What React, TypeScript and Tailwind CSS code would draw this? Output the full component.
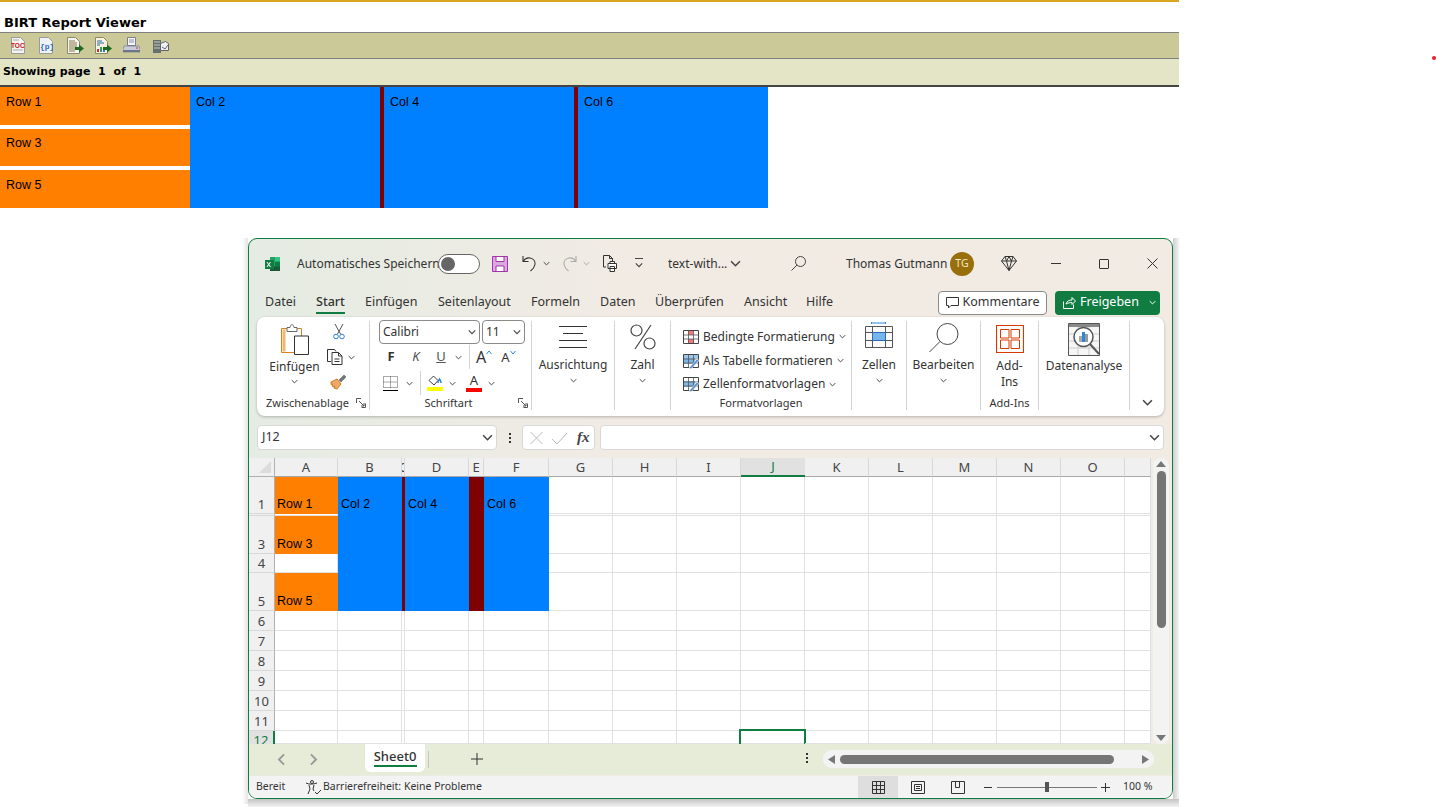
const ui = 'font-["Noto_Sans",sans-serif]';

const colLabels = ['A', 'B', 'C', 'D', 'E', 'F', 'G', 'H', 'I', 'J', 'K', 'L', 'M', 'N', 'O', ''];
const rowLabels = ['1', '', '3', '4', '5', '6', '7', '8', '9', '10', '11', '12'];

function Chev({ size = 7, color = '#444', className = '' }: { size?: number; color?: string; className?: string }) {
  return (
    <svg width={size} height={size} viewBox="0 0 10 10" className={className} fill="none" stroke={color} strokeWidth="1.4">
      <path d="M1 3l4 4 4-4" />
    </svg>
  );
}

function Launcher() {
  return (
    <svg width="10" height="10" viewBox="0 0 10 10" fill="none" stroke="#555" strokeWidth="1">
      <path d="M.5 5V.5H5M9.5 5.5v4h-4M3 3l5 5M5 8h3V5" />
    </svg>
  );
}

function TocIcon() {
  return (
    <svg width="14" height="17" viewBox="0 0 14 17">
      <path d="M.5.5h9l4 4v12H.5z" fill="#f4f4f4" stroke="#9a9a9a" />
      <path d="M2 3h6M2 13h10" stroke="#aaa" />
      <text x="0" y="11" fontSize="6.5" fontWeight="700" fill="#d01010" fontFamily="Liberation Sans">TOC</text>
    </svg>
  );
}

function ParamIcon() {
  return (
    <svg width="14" height="17" viewBox="0 0 14 17">
      <path d="M.5.5h9l4 4v12H.5z" fill="#eef3fa" stroke="#9a9a9a" />
      <text x="1" y="12" fontSize="8" fontWeight="700" fill="#2b6cc4" fontFamily="Liberation Mono">{'{p}'}</text>
    </svg>
  );
}

function DocArrowIcon({ chart }: { chart?: boolean }) {
  return (
    <svg width="17" height="17" viewBox="0 0 17 17">
      <path d="M.5.5h8l4 4v12H.5z" fill={chart ? '#fbf3dc' : '#f4f4f4'} stroke="#8a8a6a" />
      {chart ? (
        <>
          <path d="M2 4h5M2 6h7M2 8h3" stroke="#2b62b0" />
          <path d="M2 12h2v3H2z" fill="#e02040" />
          <path d="M5 10h2v5H5z" fill="#20a070" />
          <path d="M8 12h2v3H8z" fill="#3070d0" />
        </>
      ) : (
        <path d="M2 4h6M2 6h8M2 8h8M2 10h8M2 12h8M2 14h6" stroke="#8a7a40" />
      )}
      <path d="M8 10h4V7.500l5 4-5 4V13H8z" fill="#1f6a1f" />
    </svg>
  );
}

function PrinterIcon() {
  return (
    <svg width="17" height="17" viewBox="0 0 17 17">
      <path d="M4.500.5h8v8h-8z" fill="#f4f6fa" stroke="#7a7f90" />
      <path d="M6 3h5M6 5h5" stroke="#8a90a0" />
      <path d="M1 9h15l1 3v3H0v-3z" fill="#c8ccd8" stroke="#6a7080" strokeWidth=".6" />
      <path d="M0 13h17v2H0z" fill="#6c7688" />
      <path d="M13 10.500h2v1h-2z" fill="#d03030" />
    </svg>
  );
}

function ServerIcon() {
  return (
    <svg width="16" height="16" viewBox="0 0 16 16">
      <path d="M0 2h8v13H0z" fill="#66706c" />
      <path d="M1 4h6M1 7h6M1 10h6" stroke="#c8ccc4" />
      <path d="M7.500 5.500l5-2 3 2v7h-8z" fill="#f0f0f0" stroke="#60646a" />
      <path d="M9 9l3 2 3-4" fill="none" stroke="#606a70" />
    </svg>
  );
}

function ExcelLogo() {
  return (
    <svg width="16" height="16" viewBox="0 0 16 16">
      <path d="M5 1h10v14H5z" fill="#21a366" />
      <path d="M10 1h5v4.700h-5z" fill="#33c481" />
      <path d="M10 5.700h5v4.600h-5z" fill="#107c41" />
      <path d="M5 10.300h10V15H5z" fill="#185c37" />
      <path d="M0 4h9v9H0z" fill="#107c41" />
      <path d="M2.500 6l1.100 1.700h.1L4.900 6H6L4.300 8.500 6 11H4.900L3.700 9.300 2.500 11H1.400l1.700-2.500L1.500 6z" fill="#fff" />
    </svg>
  );
}

function SaveIcon() {
  return (
    <svg width="16" height="16" viewBox="0 0 16 16">
      <path d="M.5.500h15v15H.5z" fill="#dba9e0" stroke="#a334ab" />
      <path d="M4 .500h8v5H4zM4 10h8v5.500H4z" fill="#fff" stroke="#a334ab" />
    </svg>
  );
}

function UndoIcon({ color }: { color: string }) {
  return (
    <svg width="15" height="17" viewBox="0 0 15 17" fill="none" stroke={color} strokeWidth="1.100">
      <path d="M1 1v5.500h5.500" />
      <path d="M1.200 6.300C3 3.500 5.500 2.500 8 3c3.500.8 5.500 3.500 5 6.500-.4 2.500-2 4.500-4.500 6.500" />
    </svg>
  );
}

function PrintPreviewIcon() {
  return (
    <svg width="15" height="17" viewBox="0 0 15 17" fill="none" stroke="#333" strokeWidth="1">
      <path d="M3 12H.5V.5h6l3 3v2.500M6.500.5v3h3" />
      <path d="M5 8.500h8.500v5H5zM7 8.500V6.500h4.500v2M7 11.500h4.500v5H7z" fill="#fff" />
    </svg>
  );
}

function PasteIcon() {
  return (
    <svg width="28" height="31" viewBox="0 0 28 31">
      <path d="M.5 4.500h20v24H.5z" fill="#fff" stroke="#d98324" strokeWidth="1" />
      <path d="M1.500 5.500h3v22h-3z" fill="#f4b66a" />
      <path d="M6 3.500h3C9.500 1.500 10.500.5 11 .5s1.500 1 2 3h3v4H6z" fill="#fff" stroke="#666" />
      <path d="M13.500 12h14v18.500h-14z" fill="#fff" stroke="#333" />
    </svg>
  );
}

function ScissorsIcon() {
  return (
    <svg width="12" height="16" viewBox="0 0 12 16" fill="none" strokeWidth="1">
      <path d="M2 0l5.500 10M10 0L4.500 10" stroke="#555" />
      <circle cx="3" cy="12.500" r="2.300" stroke="#2b7cd3" />
      <circle cx="9" cy="12.500" r="2.300" stroke="#2b7cd3" />
    </svg>
  );
}

function CopyIcon() {
  return (
    <svg width="16" height="16" viewBox="0 0 16 16" fill="none" stroke="#333" strokeWidth="1">
      <path d="M4 12.500H.5V.5h7l1.500 2" />
      <path d="M5 3.500h6.500l3.500 3.500v8.500H5zM11.500 3.500V7H15M7.500 10h5M7.500 12.500h5" fill="#fff" />
    </svg>
  );
}

function PainterIcon() {
  return (
    <svg width="17" height="16" viewBox="0 0 17 16">
      <path d="M1 8l6-3 4 5-4 5-3-1 1-2-2 1-1-2 1-1-2 .5z" fill="#f2a766" stroke="#d07a24" />
      <path d="M9 6l5-5 2 2-5 5z" fill="#777" stroke="#555" strokeWidth=".5" />
    </svg>
  );
}

function GrowFontIcon({ up }: { up: boolean }) {
  return (
    <span className="flex items-start">
      <span className={up ? 'text-[16px] leading-[18px] text-[#333]' : 'text-[13px] leading-[18px] text-[#333]'}>A</span>
      <svg width="6" height="5" viewBox="0 0 6 5" fill="none" stroke="#2b88d8" strokeWidth="1" className="mt-[2px]">
        <path d={up ? 'M.5 4L3 1l2.500 3' : 'M.5 1L3 4l2.500-3'} />
      </svg>
    </span>
  );
}

function BorderIcon() {
  return (
    <svg width="15" height="15" viewBox="0 0 15 15" fill="none" stroke="#555" strokeDasharray="1 1">
      <path d="M.5.500h14v11H.5zM7.500.5v11M.5 6h14" />
      <path d="M0 14.500h15" stroke="#000" strokeDasharray="none" />
    </svg>
  );
}

function FillIcon() {
  return (
    <span className="flex flex-col items-center w-[16px]">
      <svg width="14" height="11" viewBox="0 0 14 11" fill="none">
        <path d="M1 5.500L5.500 1l4.500 4.500L6 10z" stroke="#444" />
        <path d="M10 8c0-2 1-3 1.500-4 .5 1 1.500 2 1.500 4" stroke="#2b7cd3" strokeWidth="1.400" />
      </svg>
      <span className="w-[16px] h-[4px] bg-[#ffff00] mt-[1px]" />
    </span>
  );
}

function FormatRowIcon({ kind }: { kind: number }) {
  return (
    <svg width="16" height="16" viewBox="0 0 16 16" fill="none">
      <path d="M.5 1.500h15v13H.5z" fill="#fff" stroke="#444" />
      {kind === 0 && (
        <>
          <path d="M5 2h5v4H5zM5 10h6v4H5z" fill="#f4777a" />
          <path d="M1 6h4v4H1z" fill="#fff" />
        </>
      )}
      {kind > 0 && <path d="M1 2h14v3H1z" fill={kind === 1 ? '#9cc8ee' : '#fff'} />}
      {kind > 0 && <path d="M1 5h11v6H1z" fill="#7fb7e8" />}
      <path d="M5.500 2v12M10.500 2v12M1 6h14M1 10h14" stroke="#555" strokeWidth=".8" />
      {kind > 0 && <path d="M6 15l8-9 2 1.500-8 8.500z" fill="#5b8fc6" stroke="#fff" strokeWidth=".6" />}
    </svg>
  );
}

function CellsIcon() {
  return (
    <svg width="28" height="28" viewBox="0 0 28 28" fill="none" stroke="#555" strokeWidth="1">
      <path d="M6.500 1v2M20.500 1v2M6.500 2h14" stroke="#2b88d8" />
      <path d="M.5 5.500h27v21H.5z" fill="#fbfbfb" />
      <path d="M7.500 11.500h13v8h-13z" fill="#77b6ea" />
      <path d="M.5 11.500h27M.5 19.500h27M7.500 5.500v21M20.500 5.500v21" />
      <path d="M7.500 11.500h13v8h-13z" stroke="#2b6cb8" />
    </svg>
  );
}

function LensIcon() {
  return (
    <svg width="30" height="30" viewBox="0 0 30 30" fill="none" stroke="#444" strokeWidth="1">
      <circle cx="18.500" cy="11" r="10.500" fill="#fff" />
      <path d="M11 18.500L.5 29" />
    </svg>
  );
}

function AddInsIcon() {
  return (
    <svg width="28" height="28" viewBox="0 0 28 28" fill="none" stroke="#d83b01" strokeWidth="1">
      <path d="M.5.500h27v27H.5z" strokeWidth="1.200" />
      <path d="M4.500 4.500h8.500v8.500H4.500zM15 4.500h8.500v8.500H15zM4.500 15h8.500v8.500H4.500zM15 15h8.500v8.500H15z" />
    </svg>
  );
}

function AnalysisIcon() {
  return (
    <svg width="32" height="33" viewBox="0 0 32 33" fill="none">
      <path d="M.5.500h31v32H.5z" fill="#f6f6f6" stroke="#555" />
      <path d="M1 1h30v3H1z" fill="#8a8a8a" />
      <path d="M1 11h30M1 18h30M1 25h30M10 4v28M21 4v28" stroke="#ccc" />
      <circle cx="15.500" cy="14" r="9.500" fill="#fff" stroke="#555" strokeWidth="1.500" />
      <path d="M11 13h3v6h-3z" fill="#aaa" />
      <path d="M14 9h3v10h-3z" fill="#2b88d8" />
      <path d="M17 11h3v8h-3z" fill="#999" />
      <path d="M22 21l9 10" stroke="#555" strokeWidth="2" />
    </svg>
  );
}

function BigGroup({ width, label, lines, children, pt }: { width: string; label?: string; lines: string[]; children: React.ReactNode; pt: string }) {
  return (
    <div className={`${width} ${pt} h-[89px] border-r border-[#d4d4d4] flex flex-col items-center shrink-0`}>
      {children}
      {lines.map((l) => (
        <span key={l} className="text-[12px] leading-[16px] text-[#333]">{l}</span>
      ))}
      {!label && <Chev className="mt-[4px]" />}
      {label && <span className="mt-auto text-[11px] leading-[14px] text-[#333]">{label}</span>}
    </div>
  );
}

function Ribbon() {
  return (
    <div className="mx-[8px] w-[907px] h-[99px] bg-white rounded-[8px] shadow-[0_1px_3px_rgba(0,0,0,0.25)] flex py-[4px] shrink-0">
      <div className="w-[113px] h-[89px] border-r border-[#d4d4d4] flex flex-col shrink-0">
        <div className="flex flex-1">
          <div className="w-[74px] flex flex-col items-center pl-[1px] pt-[3px]">
            <PasteIcon />
            <span className="text-[12px] leading-[16px] mt-[4px] text-[#333]">Einfügen</span>
            <Chev className="mt-[3px]" />
          </div>
          <div className="flex flex-col pt-[3px] gap-[9px]">
            <span className="pl-[0px] flex justify-center w-[16px]"><ScissorsIcon /></span>
            <span className="flex items-center gap-[5px] -ml-[4px]"><CopyIcon /><Chev /></span>
            <span className="-ml-[1px]"><PainterIcon /></span>
          </div>
        </div>
        <div className="flex items-center justify-between pl-[9px] pr-[3px] h-[14px]">
          <span className="text-[11px] leading-[14px] text-[#333]">Zwischenablage</span>
          <Launcher />
        </div>
      </div>

      <div className="w-[162px] h-[89px] border-r border-[#d4d4d4] flex flex-col pl-[9px] shrink-0">
        <div className="flex gap-[2px] -mt-[1px]">
          <div className="w-[101px] h-[24px] border border-[#8a8a8a] rounded-[4px] flex items-center justify-between px-[3px] text-[12px] text-[#333]">
            Calibri <Chev size={8} />
          </div>
          <div className="w-[43px] h-[24px] border border-[#8a8a8a] rounded-[4px] flex items-center justify-between px-[3px] text-[12px] text-[#333]">
            11 <Chev size={8} />
          </div>
        </div>
        <div className="flex items-center h-[20px] mt-[3px] text-[#333]">
          <span className="w-[24px] text-center text-[13px] font-bold">F</span>
          <span className="w-[26px] text-center text-[13px] italic text-[#555]">K</span>
          <span className="w-[24px] text-center text-[13px] underline text-[#555]">U</span>
          <Chev className="ml-[2px]" />
          <span className="w-px h-[24px] bg-[#d4d4d4] ml-[7px] mr-[6px]" />
          <GrowFontIcon up />
          <span className="ml-[9px]"><GrowFontIcon up={false} /></span>
        </div>
        <div className="flex items-center h-[22px] mt-[5px]">
          <span className="ml-[4px]"><BorderIcon /></span>
          <Chev className="ml-[8px]" />
          <span className="w-px h-[24px] bg-[#d4d4d4] ml-[7px] mr-[6px]" />
          <FillIcon />
          <Chev className="ml-[6px]" />
          <span className="ml-[10px] flex flex-col items-center w-[16px] text-[13px] leading-[13px] text-[#333]">
            A
            <span className="w-[16px] h-[4px] bg-[#ff0000] mt-[1px]" />
          </span>
          <Chev className="ml-[6px]" />
        </div>
        <div className="flex items-center h-[14px] mt-auto pr-[3px]">
          <span className="flex-1 text-center text-[11px] leading-[14px] text-[#333]">Schriftart</span>
          <Launcher />
        </div>
      </div>

      <BigGroup width="w-[83px]" lines={['Ausrichtung']} pt="pt-[5px]">
        <svg width="28" height="23" viewBox="0 0 28 23" stroke="#333" className="mb-[8px]">
          <path d="M0 .5h28M4 7.500h20M0 14.500h28M0 21.500h28" />
        </svg>
      </BigGroup>
      <BigGroup width="w-[56px]" lines={['Zahl']} pt="pt-[3px]">
        <svg width="26" height="26" viewBox="0 0 26 26" fill="none" stroke="#444" strokeWidth="1.200" className="mb-[7px]">
          <circle cx="6.500" cy="6.500" r="5.500" />
          <circle cx="19.500" cy="19.500" r="5.500" />
          <path d="M21 1L5 25" />
        </svg>
      </BigGroup>

      <div className="w-[181px] h-[89px] border-r border-[#d4d4d4] flex flex-col shrink-0 pl-[12px] pt-[4px]">
        {['Bedingte Formatierung', 'Als Tabelle formatieren', 'Zellenformatvorlagen'].map((t, i) => (
          <div key={t} className="flex items-center h-[26px] gap-[4px] text-[12px] text-[#333]">
            <FormatRowIcon kind={i} />
            <span>{t}</span>
            <Chev />
          </div>
        ))}
        <span className="mt-auto -ml-[12px] text-center text-[11px] leading-[14px] text-[#333]">Formatvorlagen</span>
      </div>

      <BigGroup width="w-[55px]" lines={['Zellen']} pt="pt-0">
        <span className="mb-[8px]"><CellsIcon /></span>
      </BigGroup>
      <BigGroup width="w-[74px]" lines={['Bearbeiten']} pt="pt-[2px]">
        <span className="mb-[4px]"><LensIcon /></span>
      </BigGroup>
      <BigGroup width="w-[58px]" label="Add-Ins" lines={['Add-', 'Ins']} pt="pt-[4px]">
        <span className="mb-[5px]"><AddInsIcon /></span>
      </BigGroup>
      <div className="w-[91px] h-[89px] border-r border-[#d4d4d4] flex flex-col items-center pt-[2px] shrink-0">
        <AnalysisIcon />
        <span className="text-[12px] leading-[16px] mt-[2px] text-[#333]">Datenanalyse</span>
      </div>
      <div className="flex-1 flex items-end justify-center pb-[4px]">
        <Chev size={11} />
      </div>
    </div>
  );
}

function Sheet() {
  return (
    <div className="w-[902px] h-[286px] overflow-hidden grid grid-cols-[26px_63px_64px_3px_64px_15px_65px_repeat(9,64px)_26px] grid-rows-[19px_37px_2px_38px_19px_38px_repeat(6,20px)_13px] bg-white text-[13px] shrink-0">
      <div className="col-start-3 row-start-2 row-span-5 bg-[#007fff] pl-[3px] pt-[19px] font-['Liberation_Sans',sans-serif] text-[12.5px] leading-[16px] text-black">Col 2</div>
      <div className="col-start-4 row-start-2 row-span-5 bg-[#7f0000]" />
      <div className="col-start-5 row-start-2 row-span-5 bg-[#007fff] pl-[3px] pt-[19px] font-['Liberation_Sans',sans-serif] text-[12.5px] leading-[16px] text-black">Col 4</div>
      <div className="col-start-6 row-start-2 row-span-5 bg-[#7f0000]" />
      <div className="col-start-7 row-start-2 row-span-5 bg-[#007fff] pl-[3px] pt-[19px] font-['Liberation_Sans',sans-serif] text-[12.5px] leading-[16px] text-black">Col 6</div>

      <div className="relative bg-[#f0f0f0] border-r border-b border-[#b0b0b0]">
        <svg width="12" height="12" viewBox="0 0 12 12" className="absolute left-[10px] top-[3px]"><path d="M12 0v12H0z" fill="#dcdcdc" /></svg>
      </div>
      {colLabels.map((c, i) => (
        <div
          key={i}
          className={
            c === 'J'
              ? 'bg-[#e1e1e1] border-b-2 border-[#107c41] flex items-center justify-center overflow-hidden text-[#107c41] leading-none'
              : 'bg-[#f0f0f0] border-r border-b border-r-[#d8d8d8] border-b-[#a8a8a8] flex items-center justify-center overflow-hidden text-[#444] leading-none'
          }
        >
          {c}
        </div>
      ))}

      {rowLabels.map((r, ri) => {
        const rowNum = ri + 1;
        const inBlock = rowNum <= 5;
        const orange = r === '1' || r === '3' || r === '5';
        return [
          <div
            key={`h${ri}`}
            className={
              r === '12'
                ? 'bg-[#e1e1e1] border-r-2 border-[#107c41] text-center text-[#107c41] leading-[18px]'
                : 'bg-[#f0f0f0] border-r border-b border-r-[#b0b0b0] border-b-[#d8d8d8] flex items-end justify-center text-[#444] leading-[18px] overflow-hidden'
            }
          >
            {r}
          </div>,
          <div
            key={`a${ri}`}
            className={
              orange
                ? "bg-[#ff7f00] flex items-end pl-[2px] pb-[1px] font-['Liberation_Sans',sans-serif] text-[12.5px] leading-[18px] text-black"
                : 'border-r border-b border-[#e1e1e1]'
            }
          >
            {orange ? `Row ${r}` : ''}
          </div>,
          ...(inBlock ? [] : [0, 1, 2, 3, 4]).map((k) => <div key={`l${ri}-${k}`} className="border-r border-b border-[#e1e1e1]" />),
          ...colLabels.slice(6).map((c) => (
            <div key={`${c}${ri}`} className="relative border-r border-b border-[#e1e1e1]">
              {c === 'J' && r === '12' && (
                <div className="absolute -left-[2px] -top-[2px] w-[67px] h-[20px] border-2 border-[#107c41]" />
              )}
            </div>
          )),
        ];
      })}
    </div>
  );
}

export default function App() {
  return (
    <div className={`relative w-[1437px] h-[807px] overflow-hidden bg-white`}>
      <div className="w-[1179px] border-t-2 border-[#daa520] font-['DejaVu_Sans',sans-serif]">
        <div className="h-[30px] flex items-end pl-[4px] pb-[1px] text-[13px] leading-[16px] font-bold text-black">BIRT Report Viewer</div>
        <div className="h-[27px] border-y border-[#808080] bg-[#cbc998] flex items-center pl-[11px] gap-[13px]">
          <span className="w-[15px]"><TocIcon /></span>
          <span className="w-[15px]"><ParamIcon /></span>
          <DocArrowIcon />
          <span className="ml-[-2px] mr-[-2px]"><DocArrowIcon chart /></span>
          <PrinterIcon />
          <ServerIcon />
        </div>
        <div className="h-[26px] bg-[#e4e4c6] flex items-center pl-[3px] text-[11px] font-bold text-black whitespace-pre">Showing page  1  of  1</div>
        <div className="h-[2px] bg-[#444444]" />
      </div>

      <div className="flex w-[768px] h-[121px] font-['Liberation_Sans',sans-serif] text-[12.5px] leading-[16px] text-black">
        <div className="w-[190px] flex flex-col">
          <div className="h-[38px] bg-[#ff7f00] pl-[6px] pt-[7px]">Row 1</div>
          <div className="h-[37px] mt-[4px] bg-[#ff7f00] pl-[6px] pt-[6px]">Row 3</div>
          <div className="h-[38px] mt-[4px] bg-[#ff7f00] pl-[6px] pt-[7px]">Row 5</div>
        </div>
        <div className="w-[190px] bg-[#007fff] pl-[6px] pt-[7px]">Col 2</div>
        <div className="w-[4px] bg-[#7f0000]" />
        <div className="w-[190px] bg-[#007fff] pl-[6px] pt-[7px]">Col 4</div>
        <div className="w-[4px] bg-[#7f0000]" />
        <div className="w-[190px] bg-[#007fff] pl-[6px] pt-[7px]">Col 6</div>
      </div>

      <div className="absolute left-[1432px] top-[56px] w-[4px] h-[4px] rounded-full bg-[#ee1c25]" />

      {/* excel window */}
      <div className={`${ui} absolute left-[248px] top-[238px] w-[925px] h-[561px] rounded-[9px] border border-[#107c41] overflow-hidden bg-gradient-to-r from-[#e5ece3] via-[#f1ebe4] via-40% to-[#f1ebe4] flex flex-col text-[#333]`}>
        <div className="h-[49px] flex items-center pl-[16px] text-[12px] shrink-0">
          <ExcelLogo />
          <span className="ml-[16px] w-[141px] whitespace-nowrap">Automatisches Speichern</span>
          <span className="w-[42px] h-[20px] rounded-full border border-[#666] bg-white flex items-center pl-[2px]">
            <span className="w-[14px] h-[14px] rounded-full bg-[#666]" />
          </span>
          <span className="ml-[12px]"><SaveIcon /></span>
          <span className="ml-[14px]"><UndoIcon color="#333" /></span>
          <Chev className="ml-[6px]" />
          <span className="ml-[12px]"><svg width="15" height="17" viewBox="0 0 15 17" className="-scale-x-100"><g fill="none" stroke="#aaa" strokeWidth="1.100"><path d="M1 1v5.500h5.500" /><path d="M1.200 6.300C3 3.500 5.500 2.500 8 3c3.500.8 5.500 3.500 5 6.500-.4 2.500-2 4.500-4.500 6.500" /></g></svg></span>
          <Chev className="ml-[6px]" color="#aaa" />
          <span className="ml-[13px]"><PrintPreviewIcon /></span>
          <span className="ml-[16px] flex flex-col items-center gap-[2px] w-[9px]"><span className="w-[8px] h-px bg-[#444]" /><Chev size={8} /></span>
          <span className="ml-[25px] w-[62px] whitespace-nowrap">text-with...</span>
          <Chev size={11} />
          <svg width="15" height="15" viewBox="0 0 15 15" fill="none" stroke="#444" className="ml-[50px]"><circle cx="9.500" cy="5.500" r="5" /><path d="M6 9l-5.500 5.500" /></svg>
          <span className="ml-[40px] w-[104px] whitespace-nowrap">Thomas Gutmann</span>
          <span className="w-[24px] h-[24px] rounded-full bg-[#986f0b] text-[#f3e9c8] text-[10.500px] flex items-center justify-center">TG</span>
          <svg width="16" height="15" viewBox="0 0 16 15" fill="none" stroke="#333" className="ml-[27px]"><path d="M4 .5h8l3.500 4.500L8 14.500.5 5zM.5 5h15M4 .5L5.500 5 8 14.500 10.500 5 12 .5M5.500 5L8 .5 10.500 5" /></svg>
          <span className="ml-[34px] w-[10px] h-px bg-[#333]" />
          <span className="ml-[38px] w-[10px] h-[10px] border border-[#333] rounded-[1px]" />
          <svg width="11" height="11" viewBox="0 0 11 11" stroke="#333" className="ml-[38px]"><path d="M.5.500l10 10M10.500.500l-10 10" /></svg>
        </div>

        <div className="h-[29px] flex items-center pl-[16px] text-[12.500px] shrink-0">
          <span className="w-[51px]">Datei</span>
          <span className="w-[49px] relative font-medium">
            Start
            <span className="absolute left-0 top-[19px] w-[29px] h-[2px] bg-[#107c41]" />
          </span>
          <span className="w-[73px]">Einfügen</span>
          <span className="w-[93px]">Seitenlayout</span>
          <span className="w-[69px]">Formeln</span>
          <span className="w-[55px]">Daten</span>
          <span className="w-[89px]">Überprüfen</span>
          <span className="w-[62px]">Ansicht</span>
          <span className="w-[132px]">Hilfe</span>
          <span className="w-[109px] h-[24px] bg-white border border-[#8a8a8a] rounded-[4px] flex items-center justify-center gap-[4px]">
            <svg width="13" height="13" viewBox="0 0 13 13" fill="none" stroke="#333"><path d="M.5 1.500h12v8H5L2.500 12V9.500h-2z" /></svg>
            Kommentare
          </span>
          <span className="ml-[8px] w-[105px] h-[24px] bg-[#107c41] rounded-[4px] flex items-center pl-[8px] text-white">
            <svg width="13" height="13" viewBox="0 0 13 13" fill="none" stroke="#fff" className="mr-[4px]"><path d="M.5 5.500v7h10v-4M3 8c1-3 3-4 6-4V1.500l3.500 3.500L9 8.500V6.500C7 6.500 5 7 3 8z" /></svg>
            Freigeben
            <Chev color="#fff" className="ml-[10px]" />
          </span>
        </div>

        <Ribbon />

        <div className="mt-[9px] h-[25px] mx-[8px] flex items-stretch gap-[5px] text-[12.500px] shrink-0">
          <div className="w-[240px] bg-white rounded-[4px] border border-[#d8d8d8] flex items-center justify-between pl-[4px] pr-[3px]">
            J12 <Chev size={11} />
          </div>
          <div className="w-[15px] flex flex-col items-center justify-center gap-[2px]">
            <span className="w-[2px] h-[2px] bg-[#333]" />
            <span className="w-[2px] h-[2px] bg-[#333]" />
            <span className="w-[2px] h-[2px] bg-[#333]" />
          </div>
          <div className="w-[73px] bg-white rounded-[4px] border border-[#d8d8d8] flex items-center pl-[7px]">
            <svg width="38" height="14" viewBox="0 0 38 14" fill="none" stroke="#bbb"><path d="M.5 1l12 12M12.500 1l-12 12M22 8l5 5 10-11" /></svg>
            <span className="ml-[9px] font-['Liberation_Serif',serif] italic font-bold text-[15px] leading-none text-[#444]">fx</span>
          </div>
          <div className="flex-1 bg-white rounded-[4px] border border-[#d8d8d8] flex items-center justify-end pr-[3px]">
            <Chev size={11} />
          </div>
        </div>

        <div className="mt-[8px] flex h-[286px] shrink-0">
          <Sheet />
          <div className="ml-[2px] w-[16px] h-[286px] bg-[#f3f3f3] rounded-[8px] flex flex-col items-center pt-[3px] pb-[3px]">
            <svg width="10" height="6" viewBox="0 0 10 6"><path d="M5 0l5 6H0z" fill="#777" /></svg>
            <span className="mt-[4px] w-[9px] h-[157px] rounded-full bg-[#757575]" />
            <svg width="10" height="6" viewBox="0 0 10 6" className="mt-auto"><path d="M5 6L0 0h10z" fill="#777" /></svg>
          </div>
        </div>

        <div className="h-[31px] bg-[#e6ecd8] flex items-start shrink-0">
          <Chev size={13} color="#999" className="ml-[26px] mt-[9px] rotate-90" />
          <Chev size={13} color="#999" className="ml-[19px] mt-[9px] -rotate-90" />
          <div className="ml-[45px] w-[60px] h-[28px] bg-white rounded-b-[6px] flex flex-col items-center pt-[3px] text-[13px] font-medium leading-[18px]">
            Sheet0
            <span className="w-[43px] h-[2px] bg-[#107c41]" />
          </div>
          <span className="ml-[3px] mt-[7px] w-px h-[17px] bg-[#c4c4c4]" />
          <svg width="12" height="12" viewBox="0 0 12 12" stroke="#333" className="ml-[42px] mt-[9px]"><path d="M6 0v12M0 6h12" /></svg>
          <span className="ml-[323px] mt-[9px] flex flex-col gap-[2px]">
            <span className="w-[2px] h-[2px] bg-[#333]" />
            <span className="w-[2px] h-[2px] bg-[#333]" />
            <span className="w-[2px] h-[2px] bg-[#333]" />
          </span>
          <div className="ml-[15px] mt-[6px] w-[331px] h-[18px] rounded-full bg-[#f3f3f3] flex items-center px-[5px]">
            <svg width="7" height="9" viewBox="0 0 7 9"><path d="M0 4.500L7 0v9z" fill="#777" /></svg>
            <span className="ml-[5px] w-[274px] h-[9px] rounded-full bg-[#757575]" />
            <svg width="7" height="9" viewBox="0 0 7 9" className="ml-auto"><path d="M7 4.500L0 0v9z" fill="#777" /></svg>
          </div>
        </div>

        <div className="flex-1 mt-px bg-[#f3f3f3] flex items-center pl-[7px] text-[10.500px]">
          <span className="w-[49px]">Bereit</span>
          <svg width="16" height="15" viewBox="0 0 16 15" fill="none" stroke="#333" className="mr-[2px]"><circle cx="7" cy="2" r="1.500" /><path d="M1 3c3 1.500 7 1.500 11 0M4 5l1 4-2 5M9 5l-1 4 1 2M10 12l2 2 4-4" /></svg>
          <span>Barrierefreiheit: Keine Probleme</span>
          <span className="ml-auto w-[40px] h-full bg-[#dedede] flex items-center justify-center">
            <svg width="13" height="13" viewBox="0 0 13 13" fill="none" stroke="#333"><path d="M.5.500h12v12H.5zM4.500.5v12M8.500.5v12M.5 4.500h12M.5 8.500h12" /></svg>
          </span>
          <span className="w-[40px] flex justify-center">
            <svg width="14" height="13" viewBox="0 0 14 13" fill="none" stroke="#333"><path d="M.5.500h13v12H.5zM3.500 3.500h7v6h-7zM5 5.500h4M5 7.500h4" /></svg>
          </span>
          <span className="w-[40px] flex justify-center">
            <svg width="14" height="13" viewBox="0 0 14 13" fill="none" stroke="#333"><path d="M.5.500h13v12H.5zM4.500.5v6h4v-6" /></svg>
          </span>
          <span className="ml-[6px] w-[8px] h-px bg-[#333]" />
          <span className="ml-[5px] relative w-[100px] h-px bg-[#777] flex justify-center">
            <span className="absolute -top-[5px] w-[4px] h-[10px] bg-[#555]" />
          </span>
          <svg width="9" height="9" viewBox="0 0 9 9" stroke="#333" className="ml-[4px]"><path d="M4.500 0v9M0 4.500h9" /></svg>
          <span className="w-[43px] pl-[13px] pr-0 whitespace-nowrap mr-[19px]">100 %</span>
        </div>
      </div>
      <div className="absolute left-[1173px] top-[238px] w-[6px] h-[566px] bg-gradient-to-r from-[#cfcfcf] to-[#f4f4f4]" />
      <div className="absolute left-[248px] top-[799px] w-[931px] h-[8px] bg-gradient-to-b from-[#c4c4c4] to-[#f4f4f4]" />
      <div className="absolute left-[242px] top-[238px] w-[6px] h-[566px] bg-gradient-to-l from-[#e4e4e4] to-white" />
    </div>
  );
}
